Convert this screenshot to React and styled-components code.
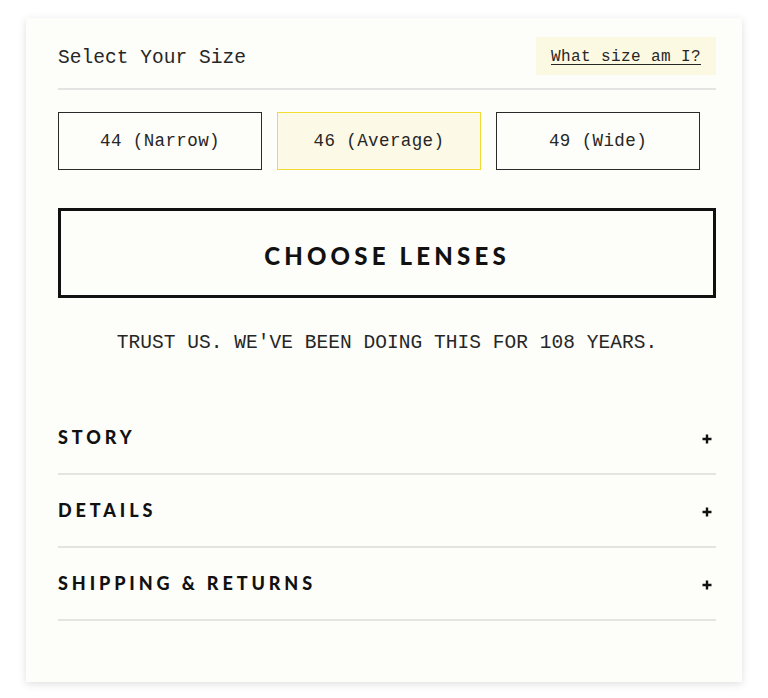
import React from "react";
import styled, { createGlobalStyle } from "styled-components";

const Global = createGlobalStyle`
  html, body { margin: 0; padding: 0; background: #ffffff; }
  body { font-family: "Liberation Mono", monospace; color: #222; }
  * { box-sizing: border-box; }
`;

const Page = styled.div`
  padding: 18px 26px 14px;
`;

const Card = styled.div`
  background: #fdfdf9;
  box-shadow: 0 2px 8px rgba(0, 0, 0, 0.13);
  padding: 19px 26px 61px 32px;
`;

const Header = styled.div`
  display: flex;
  align-items: center;
  justify-content: space-between;
  padding-bottom: 13px;
  border-bottom: 2px solid #e4e4e2;
`;

const Title = styled.div`
  font-family: "Liberation Mono", monospace;
  font-size: 19.5px;
  letter-spacing: 0.05px;
  color: #262626;
  margin-top: 3px;
`;

const HelpLink = styled.a`
  display: block;
  background: #fcf9e3;
  padding: 12px 15px 9px;
  font-family: "Liberation Mono", monospace;
  font-size: 16px;
  letter-spacing: 0.4px;
  color: #262626;
  text-decoration: underline;
  text-underline-offset: 3px;
  line-height: 17px;
`;

const Sizes = styled.div`
  display: flex;
  gap: 15px;
  margin-top: 22px;
`;

const SizeButton = styled.button`
  width: 204px;
  height: 58px;
  font-family: "Liberation Mono", monospace;
  font-size: 17.5px;
  letter-spacing: 0.4px;
  color: #262626;
  background: ${(p) => (p.$selected ? "#fcf9e6" : "transparent")};
  border: 1px solid ${(p) => (p.$selected ? "#f2dc34" : "#2a2a2a")};
  border-radius: 0;
  padding: 0;
  cursor: pointer;
`;

const ChooseButton = styled.button`
  display: block;
  width: 100%;
  height: 90px;
  margin-top: 38px;
  padding: 5px 0 0;
  background: transparent;
  border: 3px solid #111;
  font-family: Lato, "Open Sans", sans-serif;
  font-weight: 900;
  font-size: 24px;
  letter-spacing: 4.2px;
  color: #111;
  cursor: pointer;
`;

const Trust = styled.p`
  margin: 33px 0 0;
  text-align: center;
  font-family: "Liberation Mono", monospace;
  font-size: 19.5px;
  letter-spacing: 0.05px;
  line-height: 24px;
  color: #262626;
`;

const Accordion = styled.div`
  margin-top: 47px;
`;

const Row = styled.div`
  display: flex;
  align-items: center;
  justify-content: space-between;
  height: 73px;
  padding: 0 4px 0 0;
  border-bottom: 2px solid #e4e4e2;
`;

const RowTitle = styled.span`
  font-family: Lato, "Open Sans", sans-serif;
  font-weight: 900;
  font-size: 18px;
  letter-spacing: 3.9px;
  color: #111;
  margin-top: -2px;
`;

const Plus = () => (
  <svg width="10" height="10" viewBox="0 0 10 10" style={{ marginTop: 2 }}>
    <path d="M5 0.5v9M0.5 5h9" stroke="#111" strokeWidth="2.4" />
  </svg>
);

export default function App() {
  const sizes = ["44 (Narrow)", "46 (Average)", "49 (Wide)"];
  return (
    <Page>
      <Global />
      <Card>
        <Header>
          <Title>Select Your Size</Title>
          <HelpLink href="#">What size am I?</HelpLink>
        </Header>
        <Sizes>
          {sizes.map((s, i) => (
            <SizeButton key={s} $selected={i === 1}>
              {s}
            </SizeButton>
          ))}
        </Sizes>
        <ChooseButton>CHOOSE LENSES</ChooseButton>
        <Trust>TRUST US. WE'VE BEEN DOING THIS FOR 108 YEARS.</Trust>
        <Accordion>
          {["STORY", "DETAILS", "SHIPPING & RETURNS"].map((t) => (
            <Row key={t}>
              <RowTitle>{t}</RowTitle>
              <Plus />
            </Row>
          ))}
        </Accordion>
      </Card>
    </Page>
  );
}
